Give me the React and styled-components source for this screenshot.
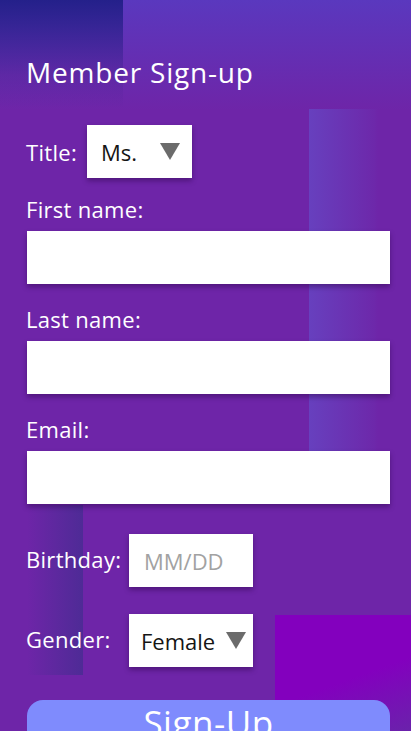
import React from "react";
import styled, { createGlobalStyle } from "styled-components";

const Global = createGlobalStyle`
  html, body { margin: 0; padding: 0; }
  body { font-family: "Open Sans", "Lato", sans-serif; background: #6e25a8; }
  * { box-sizing: border-box; }
`;

const Page = styled.div`
  width: 411px;
  height: 731px;
  overflow: hidden;
  padding: 56px 21px 0 27px;
  display: flex;
  flex-direction: column;
  color: #fff;
  background:
    linear-gradient(to right, rgba(111, 37, 169, 0), #4e2b96) 27px 505px / 56px 170px no-repeat,
    linear-gradient(160deg, #8300be 55%, #6a22ab) 275px 615px / 136px 116px no-repeat,
    linear-gradient(to right, #6740be, #6d28aa 95%, #6e25a8) 309px 109px / 69px 342px no-repeat,
    linear-gradient(to bottom, #24208a, rgba(80, 36, 150, 0.4) 70%, rgba(110, 37, 168, 0)) 0 0 / 123px 108px no-repeat,
    linear-gradient(to bottom, #5a38be 0, #6e25a8 110px);
  background-color: #6e25a8;
`;

const Heading = styled.h1`
  margin: 0 0 37px -1px;
  font-size: 28px;
  line-height: 32px;
  font-weight: 400;
  letter-spacing: 0.8px;
`;

const Label = styled.label`
  font-size: 22px;
  line-height: 26px;
  letter-spacing: 0.3px;
  color: #fff;
  ${(p) => (p.$width ? `width: ${p.$width}px; flex: none;` : "")}
`;

const TitleRow = styled.div`
  display: flex;
  align-items: center;
  gap: 10px;
  margin-left: -1px;
  margin-bottom: 18px;
`;

const Field = styled.div`
  display: flex;
  flex-direction: column;
  gap: 9px;
  margin-bottom: ${(p) => p.$after}px;
  & > label { margin-left: -1px; }
`;

const shadow = "0 3px 5px rgba(45, 5, 70, 0.45)";

const TextInput = styled.input`
  display: block;
  width: ${(p) => (p.$width ? `${p.$width}px` : "100%")};
  height: 53px;
  border: none;
  outline: none;
  margin: 0;
  background: #fff;
  box-shadow: ${shadow};
  padding: 0 0 0 15px;
  font-family: "Open Sans", "Lato", sans-serif;
  font-size: 22px;
  color: #222;
  &::placeholder { color: #a2a2a2; }
`;

const InlineRow = styled.div`
  display: flex;
  align-items: center;
  margin-left: -1px;
  margin-bottom: ${(p) => p.$after}px;
  & > label { margin-top: -3px; }
`;

const Select = styled.div`
  display: flex;
  align-items: center;
  justify-content: space-between;
  width: ${(p) => p.$width}px;
  height: 53px;
  background: #fff;
  box-shadow: ${shadow};
  padding: ${(p) => p.$pad};
  font-size: 22px;
  color: #151515;
`;

const Caret = () => (
  <svg width="20" height="17" viewBox="0 0 20 17" style={{ flex: "none" }}>
    <polygon points="0,0 20,0 10,17" fill="#6b6b6b" />
  </svg>
);

const Button = styled.button`
  display: block;
  width: 100%;
  height: 58px;
  border: none;
  border-radius: 16px;
  background: #7f8bfd;
  color: #fff;
  font-family: "Open Sans", "Lato", sans-serif;
  font-size: 35px;
  line-height: 40px;
  letter-spacing: 0.5px;
  padding: 3px 0 15px;
  text-align: center;
  flex: none;
`;

export default function App() {
  return (
    <>
      <Global />
      <Page>
        <Heading>Member Sign-up</Heading>
        <TitleRow>
          <Label>Title:</Label>
          <Select $width={105} $pad="0 12px 0 14px">
            <span>Ms.</span>
            <Caret />
          </Select>
        </TitleRow>
        <Field $after={22}>
          <Label>First name:</Label>
          <TextInput type="text" />
        </Field>
        <Field $after={22}>
          <Label>Last name:</Label>
          <TextInput type="text" />
        </Field>
        <Field $after={30}>
          <Label>Email:</Label>
          <TextInput type="email" />
        </Field>
        <InlineRow $after={27}>
          <Label $width={103}>Birthday:</Label>
          <TextInput $width={124} placeholder="MM/DD" />
        </InlineRow>
        <InlineRow $after={33}>
          <Label $width={103}>Gender:</Label>
          <Select $width={124} $pad="0 7px 0 12px">
            <span>Female</span>
            <Caret />
          </Select>
        </InlineRow>
        <Button>Sign-Up</Button>
      </Page>
    </>
  );
}
